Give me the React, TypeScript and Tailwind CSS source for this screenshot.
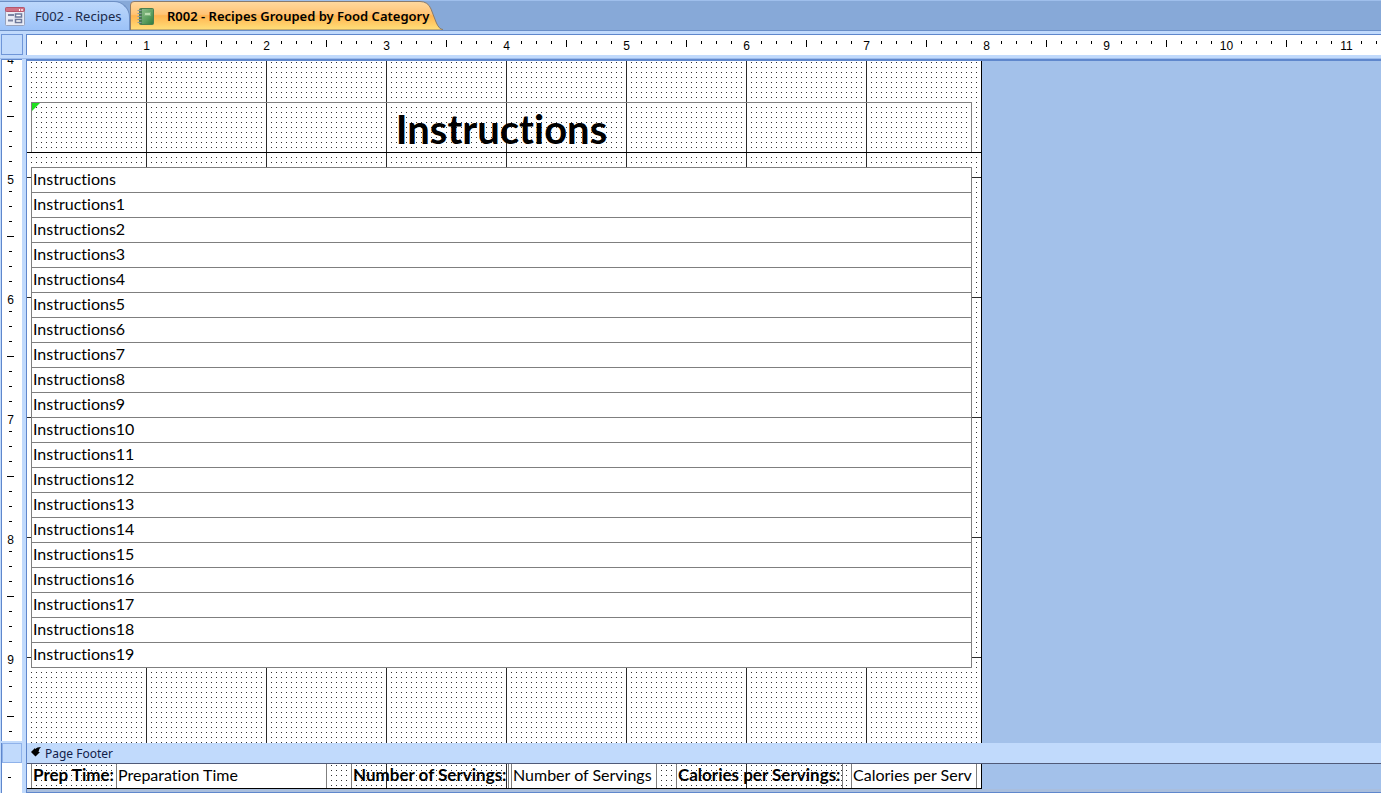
import { useId } from 'react'

const INSTRUCTIONS = Array.from({ length: 20 }, (_, i) => `Instructions${i || ''}`)

const DOT_GRID =
	'bg-[linear-gradient(90deg,#2b2b2b_1px,transparent_1px),linear-gradient(#2b2b2b_1px,transparent_1px),linear-gradient(#fff_4px,transparent_4px),linear-gradient(90deg,#fff_4px,#333_4px)] bg-[length:120px_100%,100%_120px,5px_5px,5px_5px]'

const FormIcon = () => (
	<svg className="h-5 w-5 shrink-0" viewBox="0 0 20 20" aria-hidden="true">
		<rect x="0.5" y="0.5" width="19" height="18" rx="1" fill="#e9ecf6" stroke="#98a2bb" />
		<rect x="0.5" y="0.5" width="19" height="4" rx="1" fill="#cf7286" stroke="#b5566c" />
		<rect x="14" y="2" width="1" height="2" fill="#fff" />
		<rect x="16" y="2" width="2" height="2" fill="#f3ccd2" />
		<path d="M3 8h6M3 13.5h5" stroke="#7b84a2" strokeWidth="2" />
		<rect x="10.5" y="7" width="6" height="3" fill="#fff" stroke="#6d789a" strokeWidth="1.5" />
		<rect x="10.5" y="12.5" width="6" height="3" fill="#fff" stroke="#6d789a" strokeWidth="1.5" />
	</svg>
)

const ReportIcon = () => (
	<svg className="h-[18px] w-[18px] shrink-0" viewBox="0 0 18 18" aria-hidden="true">
		<defs>
			<linearGradient id="cover" x1="0" y1="0" x2="1" y2="1">
				<stop offset="0" stopColor="#93c290" />
				<stop offset="0.6" stopColor="#5b9e5f" />
				<stop offset="1" stopColor="#2f7a3c" />
			</linearGradient>
		</defs>
		<rect x="2.5" y="0.5" width="14" height="16" rx="1" fill="url(#cover)" stroke="#4b7f50" />
		<rect x="3" y="1" width="2" height="15" fill="#4a7d54" />
		<rect x="7.5" y="4.5" width="6" height="3" fill="#b9dcb0" stroke="#7fb47c" />
		<path d="M0.5 2.5h4M0.5 5.5h4M0.5 8.5h4M0.5 11.5h4M0.5 14.5h4" stroke="#8d9aa0" />
	</svg>
)

const Tabs = () => (
	<nav className="flex h-[31px] items-end border-t border-b border-t-[#9fbfec] border-b-[#6b8fc7] bg-[#87a9d8] text-[13px]">
		<button className="flex h-[29px] w-[130px] items-center gap-[10px] rounded-tr-2xl border-t border-r border-[#6d8fc4] bg-linear-to-b from-[#bcd7fb] to-[#9cc2f8] pt-px pl-[5px] whitespace-nowrap text-[#1b2a4a]">
			<FormIcon />
			F002 - Recipes
		</button>
		<button className="relative flex h-[29px] w-[313px] items-center gap-3 pt-[2px] pl-[7px] font-semibold whitespace-nowrap text-black">
			<svg className="absolute inset-0 h-full w-full" viewBox="0 0 313 29" preserveAspectRatio="none" aria-hidden="true">
				<defs>
					<linearGradient id="active" x1="0" y1="0" x2="0" y2="1">
						<stop offset="0" stopColor="#ffd9a0" />
						<stop offset="0.45" stopColor="#ffc374" />
						<stop offset="0.5" stopColor="#ffb450" />
						<stop offset="1" stopColor="#ffe07a" />
					</linearGradient>
				</defs>
				<path d="M0.5 29V4Q0.5 0.5 4 0.5H290Q298 0.5 301 8L306 21Q309 28.5 313 28.5V29Z" fill="url(#active)" stroke="#8b7b6b" />
			</svg>
			<span className="relative"><ReportIcon /></span>
			<span className="relative">R002 - Recipes Grouped by Food Category</span>
		</button>
	</nav>
)

const HorizontalRuler = () => (
	<div className="flex h-[21px] min-w-0 flex-1 overflow-hidden border-t border-l border-[#5f87cc] bg-white pl-[7px]">
		{Array.from({ length: 90 }, (_, i) => i + 1).map((n) => (
			<span key={n} className="flex h-full w-[15px] shrink-0 justify-center pt-[5px]">
				{n % 8 === 0 ? (
					<span className="text-[12px] leading-3">{n / 8}</span>
				) : (
					<span className={n % 4 === 0 ? 'h-[7px] w-px bg-black' : 'mt-px h-[3px] w-px bg-black'} />
				)}
			</span>
		))}
	</div>
)

const VerticalRuler = () => (
	<div className="ml-px h-[682px] w-[21px] shrink-0 overflow-hidden border-t border-l border-[#5f87cc] bg-white">
		<div className="-mt-[11px]">
			{Array.from({ length: 46 }, (_, i) => i + 32).map((n) => (
				<span key={n} className="flex h-[15px] items-center justify-center pr-[3px]">
					{n % 8 === 0 ? (
						<span className="pt-[7px] text-[12px] leading-3">{n / 8}</span>
					) : (
						<span className={n % 4 === 0 ? 'h-px w-[7px] bg-black' : 'h-px w-[3px] bg-black'} />
					)}
				</span>
			))}
		</div>
	</div>
)

type FieldProps = { label: string; value: string; labelClass: string; inputClass: string }

const FooterField = ({ label, value, labelClass, inputClass }: FieldProps) => {
	const id = useId()
	return (
		<>
			<label htmlFor={id} className={`h-full shrink-0 border-[#7f7f7f] pl-px text-[17px] font-bold whitespace-nowrap ${labelClass}`}>{label}</label>
			<input id={id} readOnly defaultValue={value} className={`h-full min-w-0 shrink-0 border-x border-[#7f7f7f] bg-white pb-[3px] pl-px outline-none ${inputClass}`} />
		</>
	)
}

export default function App() {
	return (
		<div className="flex min-h-screen flex-col overflow-hidden bg-[#c1dafc] font-['Noto_Sans',sans-serif] text-black">
			<Tabs />

			<div className="flex gap-[3px] border-b border-[#9dbcec] pt-[3px] pb-[3px] pl-px font-['Liberation_Sans',sans-serif]">
				<button aria-label="Select report" className="h-[21px] w-[22px] shrink-0 border border-[#6f96d8] bg-[#c1dafc]" />
				<HorizontalRuler />
			</div>

			<div className="flex flex-1 font-['Liberation_Sans',sans-serif]">
				<VerticalRuler />
				<main className="ml-1 flex min-w-0 flex-1 border-t-2 border-l border-[#5f87cc] bg-[#a3c1ea] font-['Lato',sans-serif] [font-variant-ligatures:none]">
					<section className={`flex w-[955px] shrink-0 flex-col border-r border-black bg-[position:-1px_0px,0px_-4px,0px_2px,0px_2px] pt-[41px] ${DOT_GRID}`}>
						<div className="border-b border-black pr-[9px] pl-1">
							<div className="relative h-[50px] border-x border-t border-[#7f7f7f]">
								<span className="absolute top-0 left-0 border-t-8 border-r-8 border-t-[#1fe01f] border-r-transparent" />
								<h1 className="pt-[2px] text-center text-[40px] leading-[48px] font-bold">Instructions</h1>
							</div>
						</div>
						<div className="mt-[14px] mr-[9px] ml-1 flex flex-col border border-b-0 border-[#7f7f7f] bg-white">
							{INSTRUCTIONS.map((name) => (
								<input key={name} aria-label={name} readOnly defaultValue={name} className="h-[25px] border-b border-[#7f7f7f] pb-[3px] pl-px text-[16px] outline-none" />
							))}
						</div>
					</section>
				</main>
			</div>

			<div className="flex">
				<div className="ml-px flex w-[21px] shrink-0 flex-col border-l border-[#5f87cc] bg-white">
					<button aria-label="Select page footer" className="h-5 border border-[#8fb2ea] bg-[#c1dafc]" />
					<span className="mt-[14px] ml-[6px] h-px w-[3px] bg-black" />
				</div>
				<div className="ml-1 flex min-w-0 flex-1 flex-col border-l border-[#5f87cc] bg-[#a3c1ea]">
					<h2 className="flex h-[21px] items-center gap-[3px] border-b border-[#505a78] bg-[#c1dafc] pt-px pl-1 text-[12px] text-[#10204a]">
						<svg className="mb-1 h-[10px] w-[11px]" viewBox="0 0 11 10" aria-hidden="true">
							<path d="M0 5L4 1V2Q6 0 10 0Q7.5 2 7.5 5H9L4.5 9.5Z" fill="#000" />
						</svg>
						Page Footer
					</h2>
					<section className={`flex h-[25px] w-[955px] border-r border-b border-black bg-[position:-1px_0px,0px_60px,0px_2px,0px_2px] pl-1 font-['Lato',sans-serif] text-[16px] leading-[22px] [font-variant-ligatures:none] ${DOT_GRID}`}>
						<FooterField label="Prep Time:" value="Preparation Time" labelClass="w-[85px] border-l" inputClass="mr-6 w-[211px]" />
						<FooterField label="Number of Servings:" value="Number of Servings" labelClass="mr-[2px] w-[158px] border-x" inputClass="mr-[19px] w-[146px]" />
						<FooterField label="Calories per Servings:" value="Calories per Servings" labelClass="mr-[8px] w-[167px] border-x" inputClass="w-[126px] pr-1" />
					</section>
					<div className="h-1 border-b border-[#5f87cc] bg-[#a9bedd]" />
				</div>
			</div>
		</div>
	)
}
